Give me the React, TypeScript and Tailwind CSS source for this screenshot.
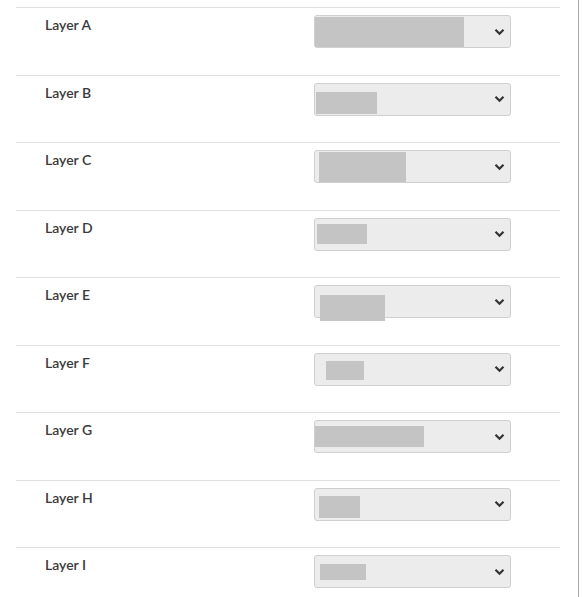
import React from 'react';

type Layer = {
  name: string;
  // redacted value box inside the select: left, top, width, height
  box: [number, number, number, number];
};

const LAYERS: Layer[] = [
  { name: 'Layer A', box: [1, 2, 149, 30] },
  { name: 'Layer B', box: [2, 9, 61, 22] },
  { name: 'Layer C', box: [5, 2, 87, 30] },
  { name: 'Layer D', box: [3, 6, 50, 20] },
  { name: 'Layer E', box: [6, 10, 65, 26] },
  { name: 'Layer F', box: [12, 8, 38, 19] },
  { name: 'Layer G', box: [1, 6, 109, 21] },
  { name: 'Layer H', box: [5, 8, 41, 22] },
  { name: 'Layer I', box: [6, 9, 46, 16] },
];

function Chevron() {
  return (
    <svg width="11" height="8" viewBox="0 0 11 8" className="text-[#333]">
      <path d="M1.5 1.8 L5.5 5.8 L9.5 1.8" fill="none" stroke="currentColor" strokeWidth="2.2" />
    </svg>
  );
}

function LayerRow({ layer }: { layer: Layer }) {
  const [l, t, w, h] = layer.box;
  return (
    <div className="flex h-[67.5px] items-start border-t border-[#e0e0e0] pt-[7px]">
      <div className="w-[298px] pl-[29px] text-[14px] leading-5 font-semibold text-[#3a3a3a]">{layer.name}</div>
      <div className="relative flex h-[33px] w-[197px] items-center justify-end rounded-[3px] border border-[#cfcfcf] bg-[#ececec] pr-[5px]">
        <div className="absolute bg-[#c4c4c4]" style={{ left: l - 1, top: t - 1, width: w, height: h }} />
        <Chevron />
      </div>
    </div>
  );
}

export default function App() {
  return (
    <div className="h-[597px] w-[579px] overflow-hidden border-r border-[#a8a8a8] bg-white pt-[7px] font-['Lato','Liberation_Sans',sans-serif]">
      <div className="ml-[16px] w-[544px]">
        {LAYERS.map((layer) => (
          <LayerRow key={layer.name} layer={layer} />
        ))}
      </div>
    </div>
  );
}
